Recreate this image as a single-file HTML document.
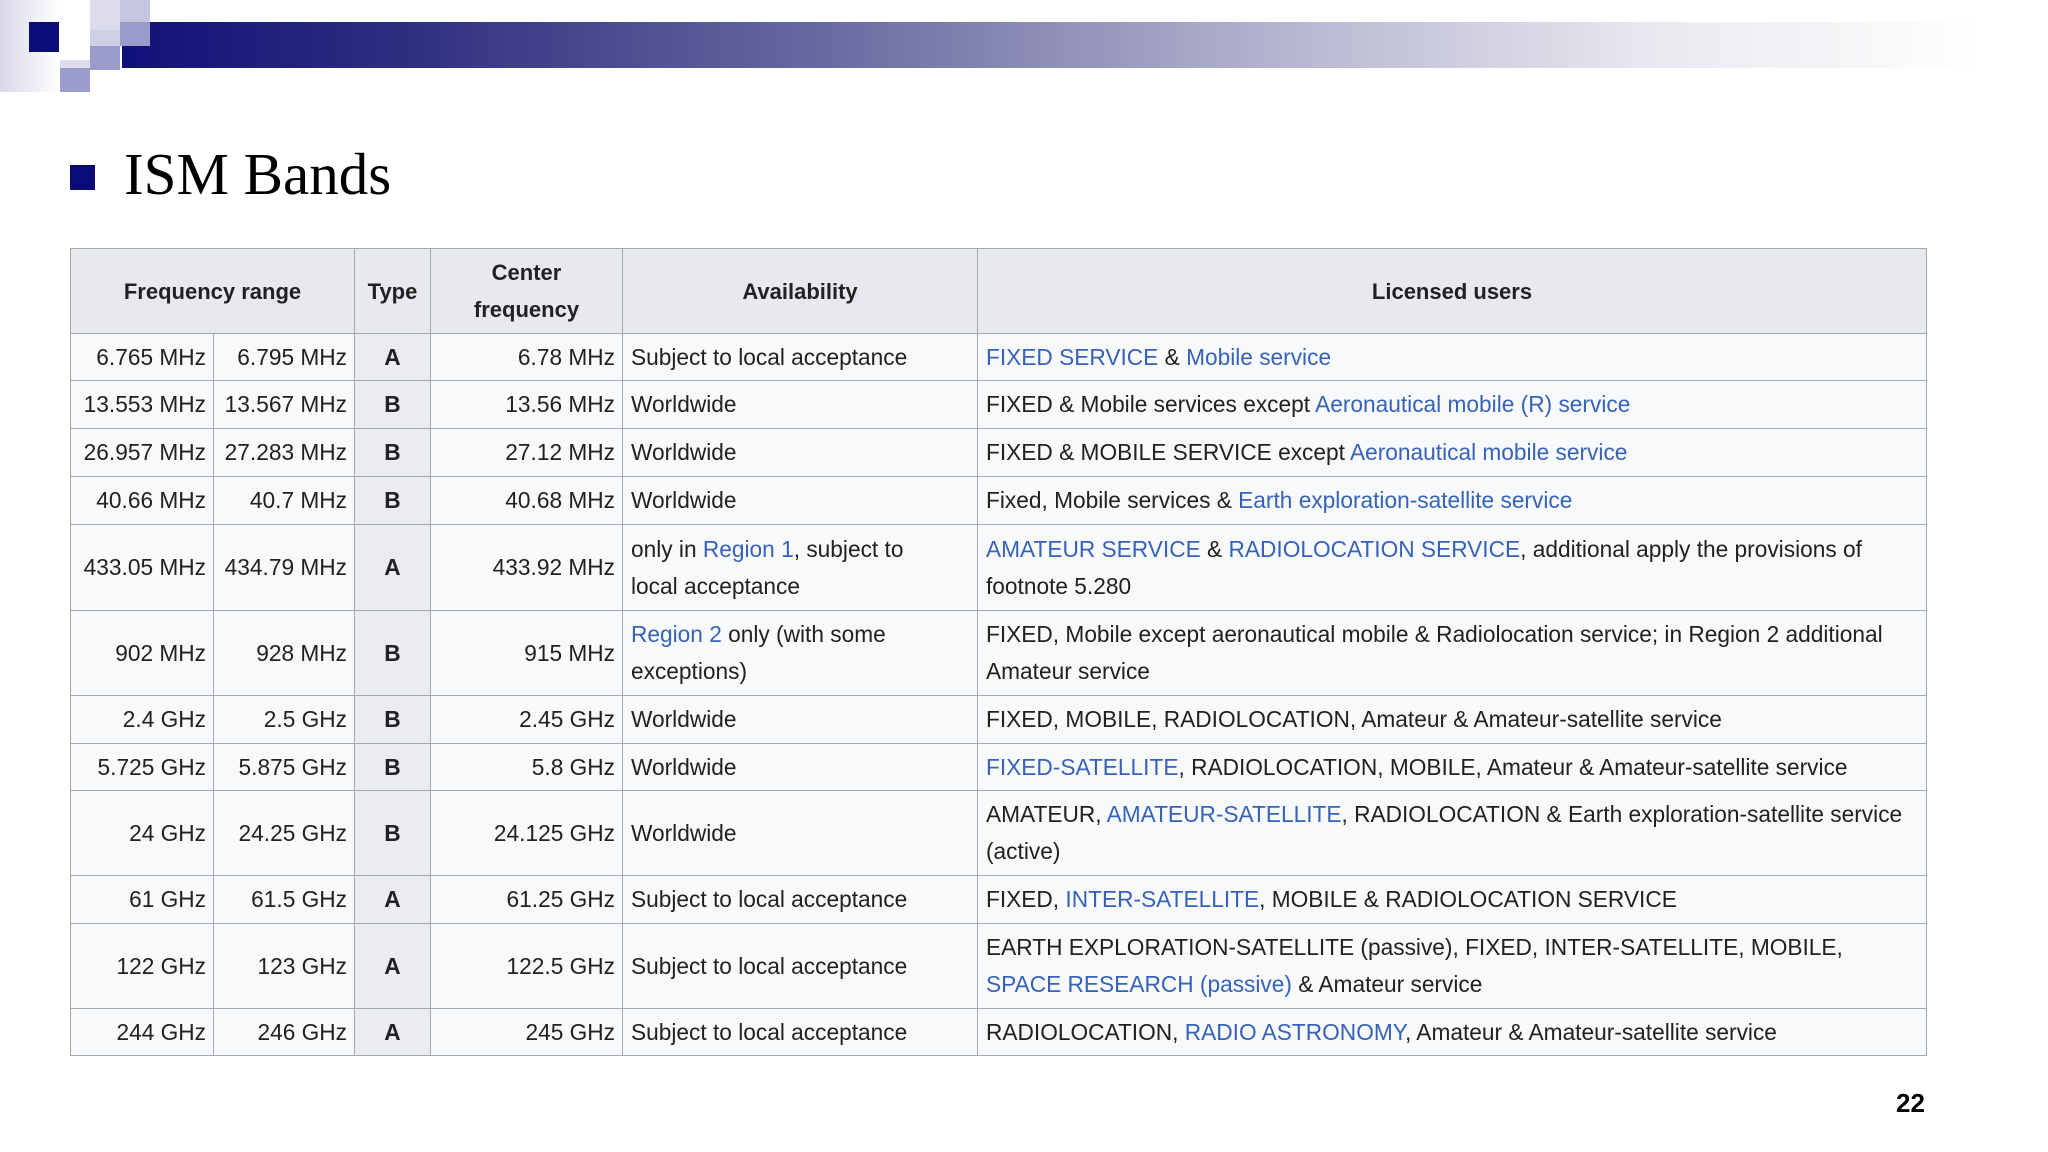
<!DOCTYPE html>
<html><head><meta charset="utf-8"><style>
body{margin:0;width:2048px;height:1152px;background:#fff;position:relative;overflow:hidden;font-family:"Liberation Sans",Arial,sans-serif}
.sq{position:absolute;width:30px;height:30px}
.bar{position:absolute;left:122px;top:22px;width:1860px;height:46px;background:linear-gradient(to right,#10107a 0%,#2e2e80 15%,#6a6aa2 38%,#b4b4cf 62%,#e8e8f0 82%,#fff 100%)}
.title{position:absolute;left:124px;top:138px;font-family:"Liberation Serif","Times New Roman",serif;font-size:59px;color:#000;line-height:72px}
.bullet{position:absolute;left:70px;top:165px;width:25px;height:25px;background:#0b0b78}
table{position:absolute;left:70px;top:248px;border-collapse:collapse;table-layout:fixed;width:1856px;font-size:22.7px;color:#202122}
td,th{border:1.5px solid #a2a9b1;background:#f8f9fa;padding:0 8px;line-height:37px}
th{background:#e8e9ec;font-weight:bold;font-size:22px}
td.r{text-align:right;white-space:nowrap;padding-right:7px}
td.t{text-align:center;font-weight:bold;background:#eaecf0}
a{color:#3662b8;text-decoration:none}
.pg{position:absolute;left:1896px;top:1088px;font-size:26px;font-weight:bold;color:#000}
</style></head><body>
<div class="sq" style="left:0;top:0;width:60px;height:92px;background:linear-gradient(to right,#d8d8ea,#fff)"></div>
<div class="sq" style="left:90px;top:0;background:#dcdcec"></div>
<div class="sq" style="left:120px;top:0;background:#c6c6e0"></div>
<div class="sq" style="left:90px;top:30px;background:#cfcfe6"></div>
<div class="bar"></div>
<div class="sq" style="left:120px;top:22px;background:#9a9acb;height:24px"></div>
<div class="sq" style="left:29px;top:22px;background:#0c0c78"></div>
<div class="sq" style="left:60px;top:60px;background:#dcdcec"></div>
<div class="sq" style="left:90px;top:46px;background:#9a9acb;height:24px"></div>
<div class="sq" style="left:60px;top:68px;background:#9c9ccc;height:24px"></div>
<div class="bullet"></div>
<div class="title">ISM Bands</div>
<table>
<colgroup><col style="width:143px"><col style="width:141px"><col style="width:76px"><col style="width:192px"><col style="width:355px"><col style="width:949px"></colgroup>
<tr style="height:85px"><th colspan="2">Frequency range</th><th>Type</th><th>Center<br>frequency</th><th>Availability</th><th>Licensed users</th></tr>
<tr style="height:47px"><td class="r">6.765 MHz</td><td class="r">6.795 MHz</td><td class="t">A</td><td class="r">6.78 MHz</td><td>Subject to local acceptance</td><td><a>FIXED SERVICE</a> &amp; <a>Mobile service</a></td></tr>
<tr style="height:48px"><td class="r">13.553 MHz</td><td class="r">13.567 MHz</td><td class="t">B</td><td class="r">13.56 MHz</td><td>Worldwide</td><td>FIXED &amp; Mobile services except <a>Aeronautical mobile (R) service</a></td></tr>
<tr style="height:48px"><td class="r">26.957 MHz</td><td class="r">27.283 MHz</td><td class="t">B</td><td class="r">27.12 MHz</td><td>Worldwide</td><td>FIXED &amp; MOBILE SERVICE except <a>Aeronautical mobile service</a></td></tr>
<tr style="height:48px"><td class="r">40.66 MHz</td><td class="r">40.7 MHz</td><td class="t">B</td><td class="r">40.68 MHz</td><td>Worldwide</td><td>Fixed, Mobile services &amp; <a>Earth exploration-satellite service</a></td></tr>
<tr style="height:86px"><td class="r">433.05 MHz</td><td class="r">434.79 MHz</td><td class="t">A</td><td class="r">433.92 MHz</td><td>only in <a>Region 1</a>, subject to<br>local acceptance</td><td><a>AMATEUR SERVICE</a> &amp; <a>RADIOLOCATION SERVICE</a>, additional apply the provisions of<br>footnote 5.280</td></tr>
<tr style="height:85px"><td class="r">902 MHz</td><td class="r">928 MHz</td><td class="t">B</td><td class="r">915 MHz</td><td><a>Region 2</a> only (with some<br>exceptions)</td><td>FIXED, Mobile except aeronautical mobile &amp; Radiolocation service; in Region 2 additional<br>Amateur service</td></tr>
<tr style="height:48px"><td class="r">2.4 GHz</td><td class="r">2.5 GHz</td><td class="t">B</td><td class="r">2.45 GHz</td><td>Worldwide</td><td>FIXED, MOBILE, RADIOLOCATION, Amateur &amp; Amateur-satellite service</td></tr>
<tr style="height:47px"><td class="r">5.725 GHz</td><td class="r">5.875 GHz</td><td class="t">B</td><td class="r">5.8 GHz</td><td>Worldwide</td><td><a>FIXED-SATELLITE</a>, RADIOLOCATION, MOBILE, Amateur &amp; Amateur-satellite service</td></tr>
<tr style="height:85px"><td class="r">24 GHz</td><td class="r">24.25 GHz</td><td class="t">B</td><td class="r">24.125 GHz</td><td>Worldwide</td><td style="white-space:nowrap">AMATEUR, <a>AMATEUR-SATELLITE</a>, RADIOLOCATION &amp; Earth exploration-satellite service<br>(active)</td></tr>
<tr style="height:48px"><td class="r">61 GHz</td><td class="r">61.5 GHz</td><td class="t">A</td><td class="r">61.25 GHz</td><td>Subject to local acceptance</td><td>FIXED, <a>INTER-SATELLITE</a>, MOBILE &amp; RADIOLOCATION SERVICE</td></tr>
<tr style="height:85px"><td class="r">122 GHz</td><td class="r">123 GHz</td><td class="t">A</td><td class="r">122.5 GHz</td><td>Subject to local acceptance</td><td>EARTH EXPLORATION-SATELLITE (passive), FIXED, INTER-SATELLITE, MOBILE,<br><a>SPACE RESEARCH (passive)</a> &amp; Amateur service</td></tr>
<tr style="height:47px"><td class="r">244 GHz</td><td class="r">246 GHz</td><td class="t">A</td><td class="r">245 GHz</td><td>Subject to local acceptance</td><td>RADIOLOCATION, <a>RADIO ASTRONOMY</a>, Amateur &amp; Amateur-satellite service</td></tr>
</table>
<div class="pg">22</div>
</body></html>
